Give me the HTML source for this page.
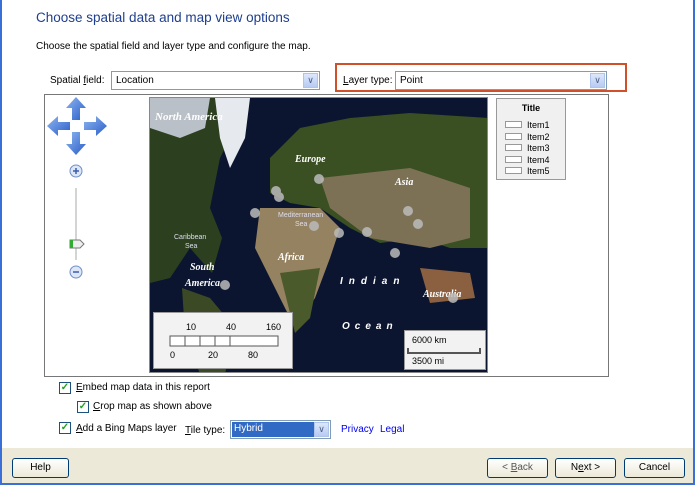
<!DOCTYPE html>
<html><head><meta charset="utf-8"><style>
*{margin:0;padding:0;box-sizing:border-box}
body{width:695px;height:485px;background:#fff;font-family:"Liberation Sans",sans-serif;font-size:10px;color:#000;position:relative;overflow:hidden}
.abs{position:absolute}
.h{left:36px;top:10px;font-size:13.5px;color:#1e3f8f}
.combo{border:1px solid #7f9db9;background:#fff;height:19px;padding:3px 4px;font-size:10px}
.dd{position:absolute;right:1px;top:1px;width:15px;height:15px;background:linear-gradient(#dde7fb,#b7cbf3);border:1px solid #b0c3ea;color:#4d6185;font-size:9px;text-align:center;line-height:13px}
.cb{width:12px;height:12px;border:1px solid #1c5180;background:#fff;color:#21a121;font-size:10px;line-height:10px;text-align:center;font-weight:bold}
.btn{height:20px;border:1px solid #003c74;border-radius:3px;background:linear-gradient(#fff,#ece9d8);text-align:center;line-height:18px;font-size:10px}
a{color:#0000ee}
</style></head><body>
<div class="abs" style="left:0;top:0;width:2px;height:485px;background:#3a6fd8"></div>
<div class="abs" style="right:0;top:0;width:2px;height:485px;background:#3a6fd8"></div>
<div class="abs h">Choose spatial data and map view options</div>
<div class="abs" style="left:36px;top:41px">Choose the spatial field and layer type and configure the map.</div>
<div class="abs" style="left:50px;top:75px">Spatial <u>f</u>ield:</div>
<div class="abs combo" style="left:111px;top:71px;width:209px">Location<div class="dd">&#8744;</div></div>
<div class="abs" style="left:335px;top:63px;width:292px;height:29px;border:2px solid #d0502a"></div>
<div class="abs" style="left:343px;top:75px"><u>L</u>ayer type:</div>
<div class="abs combo" style="left:395px;top:71px;width:212px">Point<div class="dd">&#8744;</div></div>

<div class="abs" style="left:44px;top:94px;width:565px;height:283px;border:1px solid #777;background:#fff"></div>
<svg class="abs" style="left:46px;top:96px" width="64" height="190">
<defs><linearGradient id="g" x1="0" y1="0" x2="1" y2="1"><stop offset="0" stop-color="#8fb5f0"/><stop offset="1" stop-color="#2a5ec8"/></linearGradient></defs>
<path d="M30 1 L40 12 L34 12 L34 24 L26 24 L26 12 L20 12Z" fill="url(#g)"/>
<path d="M30 59 L40 48 L34 48 L34 36 L26 36 L26 48 L20 48Z" fill="url(#g)"/>
<path d="M1 30 L12 20 L12 26 L24 26 L24 34 L12 34 L12 40Z" fill="url(#g)"/>
<path d="M61 30 L50 20 L50 26 L38 26 L38 34 L50 34 L50 40Z" fill="url(#g)"/>
<circle cx="30" cy="75" r="6" fill="#dce6f7" stroke="#6f8fc8"/><path d="M27 75h6M30 72v6" stroke="#3a5fa8" stroke-width="1.5"/>
<line x1="30" y1="92" x2="30" y2="164" stroke="#aaa"/>
<path d="M24 144 h10 l4 4 l-4 4 h-10z" fill="#eee" stroke="#777"/><rect x="24" y="144" width="3" height="8" fill="#3a3"/>
<circle cx="30" cy="176" r="6" fill="#dce6f7" stroke="#6f8fc8"/><path d="M27 176h6" stroke="#3a5fa8" stroke-width="1.5"/>
</svg>
<svg class="abs" style="left:149px;top:97px;border:1px solid #888" width="339" height="276">
<rect width="339" height="276" fill="#0b1530"/>
<path d="M0 0 H75 L90 20 L70 60 L60 110 L72 140 L62 175 L40 150 L20 180 L0 185Z" fill="#2c4020"/>
<path d="M0 0 H60 L55 30 L30 40 L0 30Z" fill="#b9c0c8"/>
<path d="M65 0 H100 L95 40 L80 70 L70 40Z" fill="#e6eaee"/>
<path d="M32 190 L60 200 L85 230 L75 276 L50 276 L35 235Z" fill="#3b4a24"/>
<path d="M120 60 L150 30 L200 20 L260 15 L339 20 V150 L300 150 L270 140 L230 145 L200 130 L170 110 L140 105 L120 95Z" fill="#3a4f22"/>
<path d="M170 80 L260 70 L320 90 L320 140 L280 150 L220 140 L180 110Z" fill="#7d7155"/>
<path d="M110 110 L170 110 L190 130 L180 160 L165 200 L145 230 L125 190 L105 150Z" fill="#958260"/>
<path d="M130 175 L170 170 L160 220 L145 235Z" fill="#4a5a2a"/>
<path d="M270 170 L320 175 L325 200 L280 205Z" fill="#8a6040"/>
<text x="5" y="22" fill="#fff" font-family="Liberation Serif" font-style="italic" font-weight="bold" font-size="11">North America</text>
<text x="145" y="64" fill="#fff" font-family="Liberation Serif" font-style="italic" font-weight="bold" font-size="10">Europe</text>
<text x="245" y="87" fill="#fff" font-family="Liberation Serif" font-style="italic" font-weight="bold" font-size="10">Asia</text>
<text x="128" y="162" fill="#fff" font-family="Liberation Serif" font-style="italic" font-weight="bold" font-size="10">Africa</text>
<text x="40" y="172" fill="#fff" font-family="Liberation Serif" font-style="italic" font-weight="bold" font-size="10">South</text>
<text x="35" y="188" fill="#fff" font-family="Liberation Serif" font-style="italic" font-weight="bold" font-size="10">America</text>
<text x="190" y="186" fill="#fff" font-style="italic" font-weight="bold" font-size="10" letter-spacing="6">Indian</text>
<text x="192" y="231" fill="#fff" font-style="italic" font-weight="bold" font-size="10" letter-spacing="5">Ocean</text>
<text x="273" y="199" fill="#fff" font-family="Liberation Serif" font-style="italic" font-weight="bold" font-size="10">Australia</text>
<text x="128" y="119" fill="#dde" font-size="7">Mediterranean</text><text x="145" y="128" fill="#dde" font-size="7">Sea</text>
<text x="24" y="141" fill="#dde" font-size="7">Caribbean</text><text x="35" y="150" fill="#dde" font-size="7">Sea</text>
<g fill="#bbb" opacity=".85"><circle cx="105" cy="115" r="5"/><circle cx="126" cy="93" r="5"/><circle cx="129" cy="99" r="5"/><circle cx="169" cy="81" r="5"/><circle cx="164" cy="128" r="5"/><circle cx="189" cy="135" r="5"/><circle cx="217" cy="134" r="5"/><circle cx="258" cy="113" r="5"/><circle cx="268" cy="126" r="5"/><circle cx="245" cy="155" r="5"/><circle cx="75" cy="187" r="5"/><circle cx="303" cy="200" r="5"/></g>
</svg>
<div class="abs" style="left:153px;top:312px;width:140px;height:57px;background:#f2f2f2;border:1px solid #999"></div>
<svg class="abs" style="left:153px;top:312px" width="140" height="57" font-size="9" font-family="Liberation Sans">
<text x="33" y="18">10</text><text x="73" y="18">40</text><text x="113" y="18">160</text>
<rect x="17" y="24" width="108" height="10" fill="#fff" stroke="#555"/>
<path d="M32 24v10M47 24v10M62 24v10M77 24v10" stroke="#555"/>
<text x="17" y="46">0</text><text x="55" y="46">20</text><text x="95" y="46">80</text></svg>
<div class="abs" style="left:404px;top:330px;width:82px;height:40px;background:#f2f2f2;border:1px solid #999"></div>
<svg class="abs" style="left:404px;top:330px" width="82" height="40" font-size="9" font-family="Liberation Sans">
<text x="8" y="13">6000 km</text><path d="M4 18v5h72v-5" fill="none" stroke="#555" stroke-width="2"/><text x="8" y="34">3500 mi</text></svg>
<div class="abs" style="left:496px;top:98px;width:70px;height:82px;border:1px solid #999;background:#f0f0f0;font-size:9px">
<div style="text-align:center;font-weight:bold;margin-top:4px;font-size:9px">Title</div>
<div style="position:absolute;left:8px;top:21px;line-height:11.5px">
<div><span style="display:inline-block;width:17px;height:7px;border:1px solid #999;background:#fff;margin-right:5px"></span>Item1</div>
<div><span style="display:inline-block;width:17px;height:7px;border:1px solid #999;background:#fff;margin-right:5px"></span>Item2</div>
<div><span style="display:inline-block;width:17px;height:7px;border:1px solid #999;background:#fff;margin-right:5px"></span>Item3</div>
<div><span style="display:inline-block;width:17px;height:7px;border:1px solid #999;background:#fff;margin-right:5px"></span>Item4</div>
<div><span style="display:inline-block;width:17px;height:7px;border:1px solid #999;background:#fff;margin-right:5px"></span>Item5</div>
</div></div>
<div class="abs cb" style="left:59px;top:382px">&#10003;</div><div class="abs" style="left:76px;top:382px"><u>E</u>mbed map data in this report</div>
<div class="abs cb" style="left:77px;top:401px">&#10003;</div><div class="abs" style="left:93px;top:401px"><u>C</u>rop map as shown above</div>
<div class="abs cb" style="left:59px;top:422px">&#10003;</div><div class="abs" style="left:76px;top:423px"><u>A</u>dd a Bing Maps layer</div>
<div class="abs" style="left:185px;top:425px"><u>T</u>ile type:</div>
<div class="abs combo" style="left:230px;top:420px;width:101px;padding:1px"><span style="display:block;background:#316ac5;color:#fff;width:83px;height:15px;padding:1px 2px">Hybrid</span><div class="dd">&#8744;</div></div>
<a class="abs" style="left:341px;top:424px">Privacy</a><a class="abs" style="left:380px;top:424px">Legal</a>
<div class="abs" style="left:2px;top:448px;width:691px;height:35px;background:#ece9d8"></div>
<div class="abs" style="left:0;top:483px;width:695px;height:2px;background:#3a6fd8"></div>
<div class="abs btn" style="left:12px;top:458px;width:57px">Help</div>
<div class="abs btn" style="left:487px;top:458px;width:61px;color:#555">&lt; <u>B</u>ack</div>
<div class="abs btn" style="left:555px;top:458px;width:61px">N<u>e</u>xt &gt;</div>
<div class="abs btn" style="left:624px;top:458px;width:61px">Cancel</div>
</body></html>
